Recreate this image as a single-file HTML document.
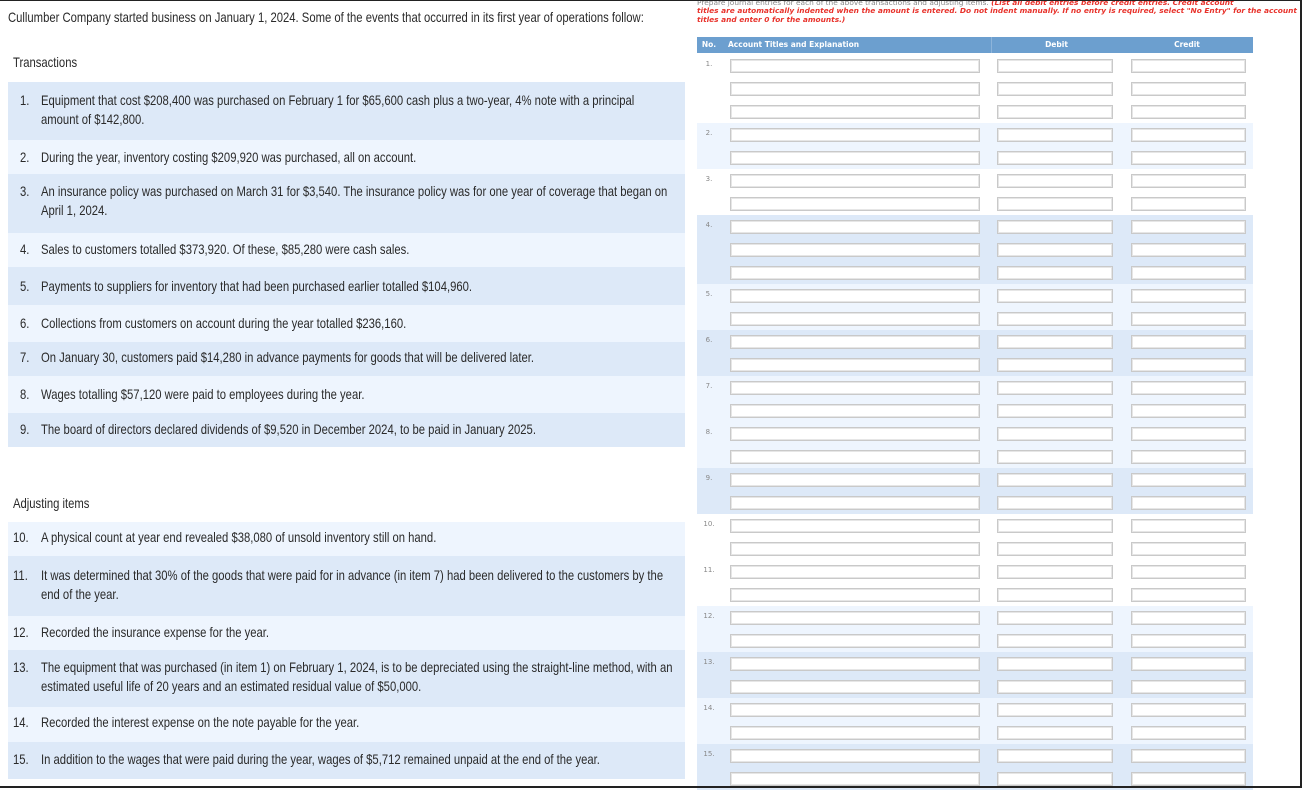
<!DOCTYPE html>
<html><head><meta charset="utf-8">
<style>
*{margin:0;padding:0;box-sizing:border-box}
body{width:1304px;height:788px;background:#fff;position:relative;overflow:hidden;font-family:"Liberation Sans",sans-serif;color:#333}
.frame{position:absolute;left:0;top:0;width:1302px;height:788px;border-top:1px solid #222;border-right:2px solid #222;border-bottom:2px solid #222}
.t{position:absolute;font-size:14px;line-height:19px;transform:scaleX(0.805);transform-origin:0 0;white-space:nowrap;color:#2a2a2a}
.bg{position:absolute;left:8px;width:677px}
.d{background:#dde9f8}.l{background:#eef5fe}
.instr{position:absolute;left:697px;top:-1px;font-family:"DejaVu Sans",sans-serif;font-size:7.4px;line-height:8.3px;color:#888;white-space:nowrap}
.instr i{color:#e8322b;font-weight:bold}
.th{position:absolute;top:37px;height:16px;background:#6c9fcf;color:#fff;font-family:"DejaVu Sans",sans-serif;font-size:7.5px;font-weight:bold;line-height:16px}
.row{position:absolute;left:697px;width:556px}
.num{position:absolute;left:697px;width:24px;font-family:"DejaVu Sans",sans-serif;font-size:7px;color:#888;text-align:center}
.inp{position:absolute;height:14px;background:#fff;border:1px solid #c9c9c9;box-shadow:inset 0 0 0 1px #e6e6e6}
</style></head><body>
<div class="t" style="left:8px;top:8px">Cullumber Company started business on January 1, 2024. Some of the events that occurred in its first year of operations follow:</div>
<div class="t" style="left:13px;top:53px">Transactions</div>

<div class="bg d" style="top:82px;height:58px"></div>
<div class="bg l" style="top:140px;height:34px"></div>
<div class="bg d" style="top:174px;height:59px"></div>
<div class="bg l" style="top:233px;height:34px"></div>
<div class="bg d" style="top:267px;height:38px"></div>
<div class="bg l" style="top:305px;height:37px"></div>
<div class="bg d" style="top:342px;height:34px"></div>
<div class="bg l" style="top:376px;height:37px"></div>
<div class="bg d" style="top:413px;height:34px"></div>

<div class="t" style="left:20px;top:91px">1.</div><div class="t" style="left:41px;top:91px">Equipment that cost $208,400 was purchased on February 1 for $65,600 cash plus a two-year, 4% note with a principal<br>amount of $142,800.</div>
<div class="t" style="left:20px;top:148px">2.</div><div class="t" style="left:41px;top:148px">During the year, inventory costing $209,920 was purchased, all on account.</div>
<div class="t" style="left:20px;top:182px">3.</div><div class="t" style="left:41px;top:182px">An insurance policy was purchased on March 31 for $3,540. The insurance policy was for one year of coverage that began on<br>April 1, 2024.</div>
<div class="t" style="left:20px;top:240px">4.</div><div class="t" style="left:41px;top:240px">Sales to customers totalled $373,920. Of these, $85,280 were cash sales.</div>
<div class="t" style="left:20px;top:277px">5.</div><div class="t" style="left:41px;top:277px">Payments to suppliers for inventory that had been purchased earlier totalled $104,960.</div>
<div class="t" style="left:20px;top:314px">6.</div><div class="t" style="left:41px;top:314px">Collections from customers on account during the year totalled $236,160.</div>
<div class="t" style="left:20px;top:348px">7.</div><div class="t" style="left:41px;top:348px">On January 30, customers paid $14,280 in advance payments for goods that will be delivered later.</div>
<div class="t" style="left:20px;top:385px">8.</div><div class="t" style="left:41px;top:385px">Wages totalling $57,120 were paid to employees during the year.</div>
<div class="t" style="left:20px;top:420px">9.</div><div class="t" style="left:41px;top:420px">The board of directors declared dividends of $9,520 in December 2024, to be paid in January 2025.</div>

<div class="t" style="left:13px;top:494px">Adjusting items</div>
<div class="bg l" style="top:522px;height:34px"></div>
<div class="bg d" style="top:556px;height:60px"></div>
<div class="bg l" style="top:616px;height:34px"></div>
<div class="bg d" style="top:650px;height:57px"></div>
<div class="bg l" style="top:707px;height:35px"></div>
<div class="bg d" style="top:742px;height:37px"></div>
<div class="t" style="left:13px;top:528px">10.</div><div class="t" style="left:41px;top:528px">A physical count at year end revealed $38,080 of unsold inventory still on hand.</div>
<div class="t" style="left:13px;top:566px">11.</div><div class="t" style="left:41px;top:566px">It was determined that 30% of the goods that were paid for in advance (in item 7) had been delivered to the customers by the<br>end of the year.</div>
<div class="t" style="left:13px;top:623px">12.</div><div class="t" style="left:41px;top:623px">Recorded the insurance expense for the year.</div>
<div class="t" style="left:13px;top:658px">13.</div><div class="t" style="left:41px;top:658px">The equipment that was purchased (in item 1) on February 1, 2024, is to be depreciated using the straight-line method, with an<br>estimated useful life of 20 years and an estimated residual value of $50,000.</div>
<div class="t" style="left:13px;top:713px">14.</div><div class="t" style="left:41px;top:713px">Recorded the interest expense on the note payable for the year.</div>
<div class="t" style="left:13px;top:750px">15.</div><div class="t" style="left:41px;top:750px">In addition to the wages that were paid during the year, wages of $5,712 remained unpaid at the end of the year.</div>

<div class="instr">Prepare journal entries for each of the above transactions and adjusting items. <i>(List all debit entries before credit entries. Credit account</i><br><i>titles are automatically indented when the amount is entered. Do not indent manually. If no entry is required, select "No Entry" for the account</i><br><i>titles and enter 0 for the amounts.)</i></div>

<div class="th" style="left:697px;width:556px"></div>
<div class="th" style="left:697px;width:24px;text-align:center">No.</div>
<div class="th" style="left:728px">Account Titles and Explanation</div>
<div class="th" style="left:991px;width:130px;text-align:center;border-left:1px solid #8db4da">Debit</div>
<div class="th" style="left:1121px;width:132px;text-align:center">Credit</div>

<div id="tbl"></div>
<script>
var rows=[3,2,2,3,2,2,2,2,2,2,2,2,2,2,2];
var cls=['','l','','d','l','d','l','l','d','','','l','d','l','d'];
var col={'':'#fff','l':'#eef5fe','d':'#dde9f8'};
var y=54,h='';
for(var i=0;i<15;i++){
 h+='<div class="row" style="top:'+y+'px;height:'+(rows[i]*23)+'px;background:'+col[cls[i]]+'"></div>';
 h+='<div class="num" style="top:'+(y+6)+'px">'+(i+1)+'.</div>';
 for(var r=0;r<rows[i];r++){
  var iy=y+r*23+5;
  h+='<div class="inp" style="left:730px;top:'+iy+'px;width:250px"></div>';
  h+='<div class="inp" style="left:997px;top:'+iy+'px;width:116px"></div>';
  h+='<div class="inp" style="left:1131px;top:'+iy+'px;width:115px"></div>';
 }
 y+=rows[i]*23;
}
document.getElementById('tbl').innerHTML=h;
</script>
<div class="frame"></div>
</body></html>
